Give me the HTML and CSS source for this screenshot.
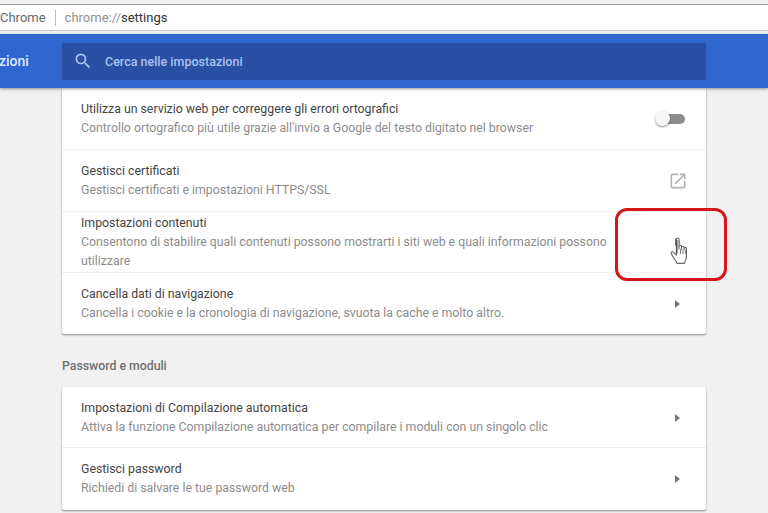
FILE: index.html
```html
<!DOCTYPE html>
<html lang="it">
<head>
  <meta charset="UTF-8">
  <title>Impostazioni</title>
  <link rel="stylesheet" href="styles.css">
</head>
<body>
  <!-- Address bar -->
  <div class="address-bar">
    <span class="chip">Chrome</span>
    <span class="url"><span class="scheme">chrome://</span>settings</span>
  </div>

  <!-- Blue header -->
  <header class="top-header">
    <div class="header-title">zioni</div>
    <div class="search-box">
      <svg class="search-icon" viewBox="0 0 24 24" width="20" height="20">
        <path fill="#a9c3f2" d="M15.5 14h-.79l-.28-.27A6.47 6.47 0 0 0 16 9.5 6.5 6.5 0 1 0 9.5 16c1.61 0 3.09-.59 4.23-1.57l.27.28v.79l5 4.99L20.49 19l-4.99-5zm-6 0C7.01 14 5 11.99 5 9.5S7.01 5 9.5 5 14 7.01 14 9.5 11.99 14 9.5 14z"/>
      </svg>
      <span class="search-text">Cerca nelle impostazioni</span>
    </div>
  </header>

  <main class="content">
    <section class="card first-card">
      <div class="row first-row">
        <div class="row-text">
          <div class="row-title">Utilizza un servizio web per correggere gli errori ortografici</div>
          <div class="row-sub">Controllo ortografico più utile grazie all'invio a Google del testo digitato nel browser</div>
        </div>
        <div class="toggle"><span class="toggle-knob"></span></div>
      </div>
      <div class="row middle-row">
        <div class="row-text">
          <div class="row-title">Gestisci certificati</div>
          <div class="row-sub">Gestisci certificati e impostazioni HTTPS/SSL</div>
        </div>
        <svg class="external-icon" viewBox="0 0 24 24" width="20" height="20">
          <path fill="#b4b4b4" d="M19 19H5V5h7V3H5a2 2 0 0 0-2 2v14a2 2 0 0 0 2 2h14c1.1 0 2-.9 2-2v-7h-2v7zM14 3v2h3.59l-9.83 9.83 1.41 1.41L19 6.41V10h2V3h-7z"/>
        </svg>
      </div>
      <div class="row tall-row">
        <div class="row-text narrow">
          <div class="row-title">Impostazioni contenuti</div>
          <div class="row-sub">Consentono di stabilire quali contenuti possono mostrarti i siti web e quali informazioni possono utilizzare</div>
        </div>
        <span class="arrow"></span>
      </div>
      <div class="row last-row">
        <div class="row-text">
          <div class="row-title">Cancella dati di navigazione</div>
          <div class="row-sub">Cancella i cookie e la cronologia di navigazione, svuota la cache e molto altro.</div>
        </div>
        <span class="arrow"></span>
      </div>
    </section>

    <h2 class="section-title">Password e moduli</h2>

    <section class="card second-card">
      <div class="row">
        <div class="row-text">
          <div class="row-title">Impostazioni di Compilazione automatica</div>
          <div class="row-sub">Attiva la funzione Compilazione automatica per compilare i moduli con un singolo clic</div>
        </div>
        <span class="arrow"></span>
      </div>
      <div class="row last-row">
        <div class="row-text">
          <div class="row-title">Gestisci password</div>
          <div class="row-sub">Richiedi di salvare le tue password web</div>
        </div>
        <span class="arrow"></span>
      </div>
    </section>
  </main>

  <!-- Annotation on top of the screenshot -->
  <div class="red-box"></div>
  <svg class="hand-cursor" viewBox="0 0 20 28" width="21" height="29">
    <path fill="#fff" stroke="#666" stroke-width="1.1" stroke-linejoin="round" d="M6 2.200c0-1.600 2.600-1.600 2.600 0v9.300l0-2.400c0-1.400 2.400-1.400 2.400 0v2.400-1.500c0-1.400 2.400-1.400 2.400 0v2-1c0-1.300 2.300-1.300 2.300 0v7.500c0 3-1.600 5.500-1.900 7H6.600c-.6-2-1.900-3.400-3.200-5.300L1.300 16.300c-.9-1.500 1-2.800 2.200-1.400L6 17.500z"/>
    <path fill="none" stroke="#444" stroke-width="1" d="M6.600 3v13"/>
    <path fill="none" stroke="#666" stroke-width=".8" d="M10 11.500v5M12.400 12v4.500M14.700 12.500v4"/>
  </svg>
</body>
</html>
```

FILE: styles.css
```css
body {
  margin: 0;
  height: 513px;
  overflow: hidden;
  position: relative;
  background-color: #f1f1f1;
  font-family: Roboto, 'Liberation Sans', sans-serif;
}

/* Address bar */
.address-bar {
  height: 25px;
  margin-top: 4px;
  background: #fff;
  border-top: 1px solid #9c9c9c;
  border-bottom: 1px solid #c8c8c8;
  display: flex;
  align-items: center;
  font-size: 13px;
  color: #666;
}

.chip {
  padding-right: 9px;
  border-right: 1px solid #bbb;
  line-height: 16px;
}

.url {
  margin-left: 9px;
  color: #333;
}

.scheme {
  color: #8f8f8f;
}

/* Blue header */
.top-header {
  height: 54px;
  margin-top: 3px;
  background: #2f66cf;
  box-shadow: 0 1px 3px rgba(0, 0, 0, 0.4);
  display: flex;
  align-items: center;
  position: relative;
  z-index: 2;
}

.header-title {
  width: 62px;
  box-sizing: border-box;
  margin-left: -1px;
  text-align: right;
  padding-right: 34px;
  font-size: 14px;
  font-weight: 500;
  color: #dfe8fa;
}

.search-box {
  width: 644px;
  height: 37px;
  margin-left: 1px;
  background: #2a50a6;
  display: flex;
  align-items: center;
  border-radius: 1px;
}

.search-icon {
  margin-left: 11px;
}

.search-text {
  margin-left: 12px;
  font-size: 12.5px;
  font-weight: 500;
  color: #a9c3f2;
}

/* Cards */
.content {
  width: 644px;
  margin-left: 62px;
}

.card {
  background: #fff;
  border-radius: 2px;
  box-shadow: 0 1px 2px rgba(0, 0, 0, 0.45);
}

.first-card {
  border-radius: 0 0 2px 2px;
}

.row {
  height: 61px;
  box-sizing: border-box;
  padding: 0 19px;
  border-bottom: 1px solid #efefef;
  display: flex;
  align-items: center;
  justify-content: space-between;
}

.first-row {
  height: 62px;
}

.middle-row {
  height: 62px;
}

.last-row {
  height: 61px;
  border-bottom: none;
}

.second-card .row {
  padding-top: 1px;
}

.second-card .last-row {
  height: 62px;
  padding-top: 0;
}

.row-text {
  flex: 1;
  min-width: 0;
}

.narrow {
  max-width: 535px;
}

.row-title {
  font-size: 12.3px;
  line-height: 19px;
  color: #444;
}

.row-sub {
  font-size: 12.3px;
  line-height: 19px;
  color: #8c8c8c;
}

.section-title {
  margin: 0;
  padding: 23px 0 12px;
  font-size: 12.3px;
  line-height: 18px;
  font-weight: 500;
  color: #707070;
}

/* Row controls */
.toggle {
  width: 28px;
  height: 10px;
  margin-right: 2px;
  border-radius: 5px;
  background: #8d8d8d;
  position: relative;
}

.toggle-knob {
  position: absolute;
  left: -2px;
  top: -3px;
  width: 15px;
  height: 15px;
  border-radius: 50%;
  background: #f7f7f7;
  box-shadow: 0 1px 2px rgba(0, 0, 0, 0.45);
}

.external-icon {
  margin-right: -1px;
}

.arrow {
  width: 0;
  height: 0;
  margin-right: 7px;
  border-top: 4px solid transparent;
  border-bottom: 4px solid transparent;
  border-left: 5px solid #777;
}

/* Annotation */
.red-box {
  position: absolute;
  left: 615px;
  top: 208px;
  width: 106px;
  height: 67px;
  border: 3px solid #d5161c;
  border-radius: 12px;
  z-index: 3;
}

.hand-cursor {
  position: absolute;
  left: 670px;
  top: 237px;
  z-index: 4;
}
```
